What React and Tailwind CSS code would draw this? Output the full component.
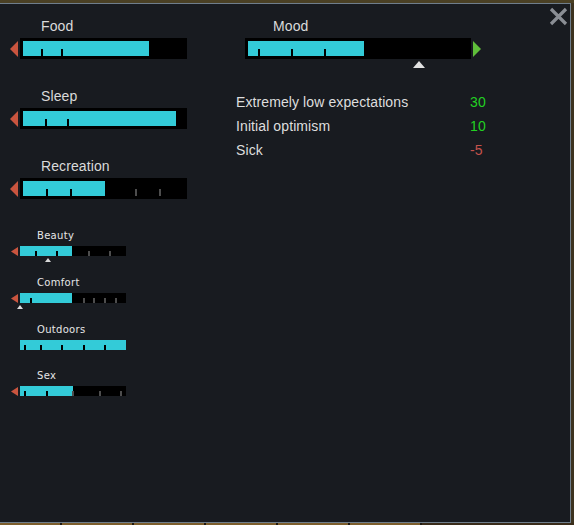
import React from "react";

const FONT = { fontFamily: '"Liberation Sans", Arial, sans-serif' };
const SMALL_FONT = { fontFamily: '"DejaVu Sans", sans-serif' };

function LeftArrow({ small }) {
  return small ? (
    <svg width="7" height="9" viewBox="0 0 7 9" className="block">
      <polygon points="0,4.5 7,0 7,9" fill="#c9553f" />
    </svg>
  ) : (
    <svg width="8" height="16" viewBox="0 0 8 16" className="block">
      <polygon points="0,8 8,0 8,16" fill="#c9553f" />
    </svg>
  );
}

function Ticks({ ticks, h }) {
  return ticks.map((t, i) => (
    <div
      key={i}
      className={`absolute bottom-0 w-[2px] ${h} ${t.g ? "bg-[#4d4d4d]" : "bg-black"}`}
      style={{ left: t.x }}
    />
  ));
}

function BigNeed({ label, fill, ticks, className = "" }) {
  return (
    <div className={className}>
      <div className="ml-[31px] h-4 text-[14px] leading-4 tracking-[0.1px] text-[#dadada]">{label}</div>
      <div className="mt-1 flex items-center">
        <LeftArrow />
        <div className="ml-[2px] h-[21px] w-[167px] bg-black p-[3px]">
          <div className="relative h-full">
            <div className="h-full bg-[#33cbd8]" style={{ width: fill }} />
            <Ticks ticks={ticks} h="h-[7px]" />
          </div>
        </div>
      </div>
    </div>
  );
}

function SmallNeed({ label, fill, ticks, arrow = true, marker, className = "" }) {
  return (
    <div className={className}>
      <div
        className="ml-[27px] h-[12px] text-[10px] leading-[12px] tracking-[0.3px] text-[#e6e6e6]"
        style={SMALL_FONT}
      >
        {label}
      </div>
      <div className="mt-1 flex items-center">
        <div className="w-[10px] flex justify-end pr-[2px]">{arrow && <LeftArrow small />}</div>
        <div className="relative h-[10px] w-[106px] bg-black">
          <div className="h-full bg-[#33cbd8]" style={{ width: fill }} />
          <Ticks ticks={ticks} h="h-[5px]" />
          {marker !== undefined && (
            <svg
              width="6"
              height="4"
              viewBox="0 0 6 4"
              className="absolute top-[12px]"
              style={{ left: marker }}
            >
              <polygon points="3,0 6,4 0,4" fill="#d9d9d9" />
            </svg>
          )}
        </div>
      </div>
    </div>
  );
}

function Thought({ label, value, color }) {
  return (
    <div className="flex h-6 items-center text-[14px] tracking-[0.1px]">
      <div className="w-[234px] text-[#dedede]">{label}</div>
      <div className={color}>{value}</div>
    </div>
  );
}

export default function App() {
  const segs = [0, 1, 2, 3, 4, 5];
  return (
    <div className="h-[525px] w-[574px] overflow-hidden bg-[#3d3320]" style={FONT}>
      <div className="h-[3px] w-full bg-[#4a4024]" />
      <div className="relative flex h-[520px] w-[571px] border-y border-r border-[#6f7e8c] bg-[#181b20] pl-[10px] pt-[14px]">
        {/* left column */}
        <div className="flex w-[177px] flex-col">
          <BigNeed label="Food" fill={126} ticks={[{ x: 18 }, { x: 38 }]} />
          <BigNeed className="mt-[29px]" label="Sleep" fill={153} ticks={[{ x: 22 }, { x: 44 }]} />
          <BigNeed
            className="mt-[29px]"
            label="Recreation"
            fill={82}
            ticks={[{ x: 23 }, { x: 47 }, { x: 112, g: true }, { x: 136, g: true }]}
          />
          <SmallNeed
            className="mt-[31px]"
            label="Beauty"
            fill={52}
            marker={25}
            ticks={[{ x: 15 }, { x: 36 }, { x: 68, g: true }, { x: 89, g: true }]}
          />
          <SmallNeed
            className="mt-[21px]"
            label="Comfort"
            fill={52}
            marker={-3}
            ticks={[{ x: 10 }, { x: 63, g: true }, { x: 73, g: true }, { x: 84, g: true }, { x: 95, g: true }]}
          />
          <SmallNeed
            className="mt-[21px]"
            label="Outdoors"
            fill={106}
            arrow={false}
            ticks={[{ x: 4 }, { x: 20 }, { x: 41 }, { x: 63 }, { x: 84 }]}
          />
          <SmallNeed
            className="mt-[20px]"
            label="Sex"
            fill={53}
            ticks={[{ x: 4 }, { x: 26 }, { x: 52, g: true }, { x: 79, g: true }, { x: 100, g: true }]}
          />
        </div>

        {/* right column */}
        <div className="ml-[49px] flex flex-col">
          <div className="ml-[37px] h-4 text-[14px] leading-4 tracking-[0.1px] text-[#dadada]">Mood</div>
          <div className="mt-1 ml-[9px] flex items-center">
            <div className="relative h-[21px] w-[226px] bg-black p-[3px]">
              <div className="relative h-full">
                <div className="h-full bg-[#33cbd8]" style={{ width: 116 }} />
                <Ticks ticks={[{ x: 10 }, { x: 43 }, { x: 76 }]} h="h-[7px]" />
              </div>
              <svg width="12" height="7" viewBox="0 0 12 7" className="absolute left-[168px] top-[23px]">
                <polygon points="6,0 12,7 0,7" fill="#e2e2e2" />
              </svg>
            </div>
            <svg width="8" height="16" viewBox="0 0 8 16" className="ml-[2px] block">
              <polygon points="8,8 0,0 0,16" fill="#5fbf3a" />
            </svg>
          </div>
          <div className="mt-[31px] flex flex-col">
            <Thought label="Extremely low expectations" value="30" color="text-[#22d022]" />
            <Thought label="Initial optimism" value="10" color="text-[#22d022]" />
            <Thought label="Sick" value="-5" color="text-[#c4524c]" />
          </div>
        </div>

        {/* close button */}
        <svg width="19" height="19" viewBox="0 0 19 19" className="absolute right-[2px] top-[3px]">
          <path d="M2 2 L17 17 M17 2 L2 17" stroke="#8a8e94" strokeWidth="3.2" />
        </svg>
      </div>
      <div className="flex h-[2px] w-full">
        {segs.map((s) => (
          <div key={s} className="flex">
            <div className={`h-full ${s === 0 ? "w-[60px]" : "w-[70px]"} bg-[#7d5e2c]`} />
            <div className="h-full w-[2px] bg-[#1e180f]" />
          </div>
        ))}
        <div className="h-full flex-1 bg-[#3a2c1a]" />
      </div>
    </div>
  );
}
